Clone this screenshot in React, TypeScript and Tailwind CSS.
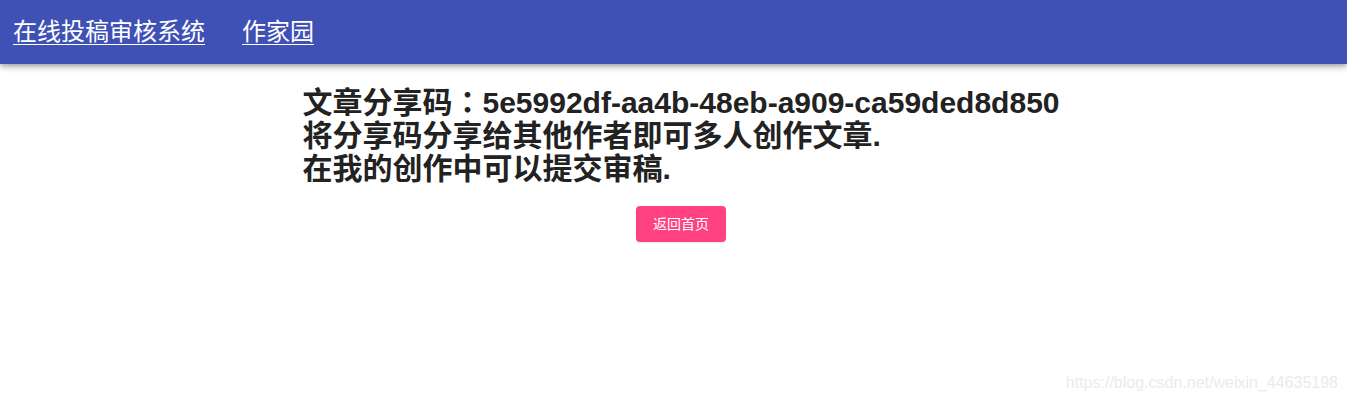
import React from "react";

export default function App() {
  const font = { fontFamily: '"Liberation Sans", "Noto Sans CJK SC", Arial, sans-serif' };
  return (
    <div className="relative min-h-[401px] w-full bg-white" style={font}>
      <header className="flex h-16 items-center gap-[37px] bg-[#3f51b5] pl-[13px] shadow-[0_2px_4px_-1px_rgba(0,0,0,0.2),0_4px_5px_0_rgba(0,0,0,0.14),0_1px_10px_0_rgba(0,0,0,0.12)]">
        <a href="#" className="text-[24px] leading-none text-white underline decoration-1 underline-offset-[4px]">
          在线投稿审核系统
        </a>
        <a href="#" className="text-[24px] leading-none text-white underline decoration-1 underline-offset-[4px]">
          作家园
        </a>
      </header>
      <main className="flex justify-center pl-[15px]">
        <div className="flex flex-col">
          <h1 className="mt-[20px] text-left text-[30px] font-bold leading-[33px] text-[#222222]">
            文章分享码
            <span className="font-['Noto_Sans_CJK_TC',sans-serif]">：</span>
            5e5992df-aa4b-48eb-a909-ca59ded8d850
            <br />
            将分享码分享给其他作者即可多人创作文章.
            <br />
            在我的创作中可以提交审稿.
          </h1>
          <div className="mt-[21px] flex justify-center">
            <button className="h-[36px] w-[90px] rounded-[4px] bg-[#ff4081] text-[14px] text-white shadow-[0_1px_2px_0_rgba(0,0,0,0.08)]">
              返回首页
            </button>
          </div>
        </div>
      </main>
      <div className="absolute bottom-[10px] right-[9px] text-[16px] leading-none text-[#ebebeb]">
        https://blog.csdn.net/weixin_44635198
      </div>
    </div>
  );
}
